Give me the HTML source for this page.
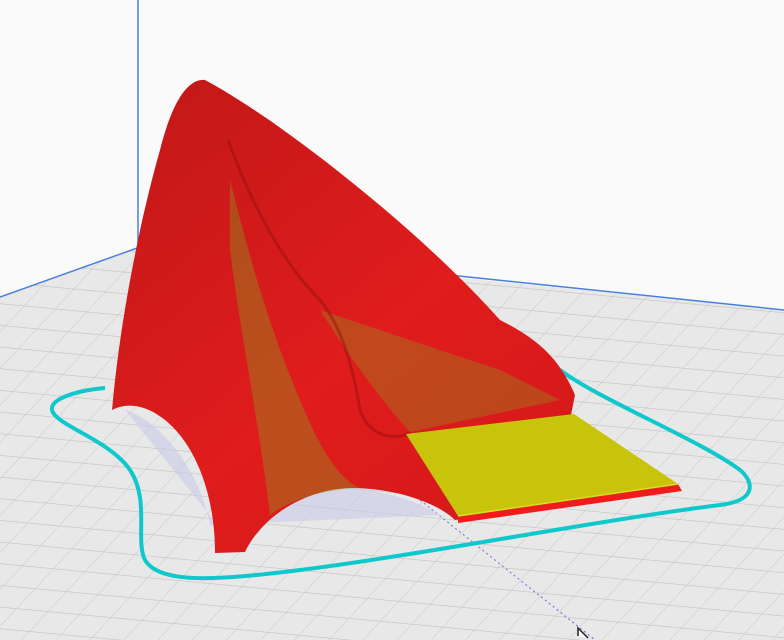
<!DOCTYPE html>
<html><head><meta charset="utf-8"><style>html,body{margin:0;padding:0;background:#fafafa;}svg{display:block}</style></head>
<body>
<svg width="784" height="640" viewBox="0 0 784 640" xmlns="http://www.w3.org/2000/svg">
<defs>
<pattern id="grid" width="34" height="20" patternUnits="userSpaceOnUse" patternTransform="skewX(-40) rotate(5)">
<rect width="34" height="20" fill="#e8e8e8"/>
<path d="M0 0H34M0 0V20" stroke="#c6c6c6" stroke-width="1.2" fill="none"/>
</pattern>
<linearGradient id="red" x1="0" y1="0" x2="1" y2="1">
<stop offset="0" stop-color="#c01818"/><stop offset="0.5" stop-color="#e01c1c"/><stop offset="1" stop-color="#d01818"/>
</linearGradient>
</defs>
<rect width="784" height="640" fill="#fafafa"/>
<polygon points="0,297 140,247 300,262 784,310 784,640 0,640" fill="url(#grid)"/>
<polyline points="0,297 140,247" stroke="#4a7fdc" stroke-width="1.5" fill="none"/>
<polyline points="430,273 784,310" stroke="#4a7fdc" stroke-width="1.5" fill="none"/>
<line x1="138" y1="0" x2="138" y2="250" stroke="#4a7fdc" stroke-width="1.5"/>
<line x1="420" y1="500" x2="595" y2="640" stroke="#6a6ae0" stroke-width="1" stroke-dasharray="2 3"/>
<path d="M105,388 C80,390 50,398 52,410 C55,425 110,440 130,470 C150,500 135,540 145,560 C160,585 220,580 300,570 C420,555 600,520 720,505 C760,500 752,480 740,470 C700,440 600,400 560,370" stroke="#0fc8cc" stroke-width="4" fill="none"/>
<path d="M125,410 C160,420 200,470 210,525 L440,515 C400,490 330,480 290,490 C260,500 240,520 230,540Z" fill="#c8cbe8" opacity="0.6"/>
<path d="M205,80 C185,78 170,110 160,150 C140,220 120,320 112,410 C140,395 180,420 200,470 C212,500 215,530 215,553 L245,552 C260,520 300,490 350,488 C400,488 440,505 455,520 L680,490 L570,420 L575,395 C560,360 540,340 500,320 C420,230 280,120 205,80Z" fill="url(#red)"/>
<path d="M230,180 C250,260 270,330 300,400 C320,450 340,480 360,488 C320,490 290,500 270,515 C260,430 240,330 230,250Z" fill="#7ab020" opacity="0.35"/>
<path d="M320,310 C380,330 440,350 500,370 L560,400 L410,432 C380,400 345,350 320,310Z" fill="#8a9a20" opacity="0.35"/>
<path d="M228,140 C250,200 280,260 320,300 C345,330 355,380 360,410 C370,440 400,440 410,432" stroke="#901010" stroke-width="3" fill="none" opacity="0.45"/>
<polygon points="406,434 574,414 678,484 458,516" fill="#c8c40c"/>
<polygon points="458,516 678,484 682,491 458,523" fill="#f01c1c"/>
<line x1="458" y1="516" x2="678" y2="484" stroke="#d8e020" stroke-width="1.5"/>
<path d="M578,636 L578,628 L588,638" stroke="#222" stroke-width="1.5" fill="#fff"/>
</svg>
</body></html>
